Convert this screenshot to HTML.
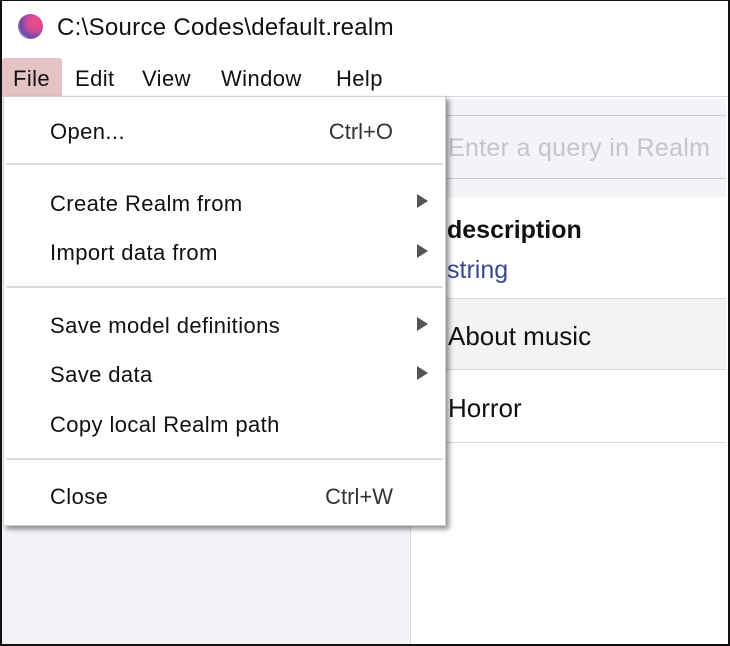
<!DOCTYPE html>
<html><head><style>
*{margin:0;padding:0;box-sizing:border-box}
body{width:730px;height:646px;overflow:hidden;background:#fff;font-family:"Liberation Sans",sans-serif;position:relative}
.frame{position:absolute;left:0;top:0;width:730px;height:646px;border:2px solid #111;border-top:1px solid #111;z-index:50;pointer-events:none}
.abs{position:absolute;white-space:nowrap}
.t{font-size:22px;color:#111;letter-spacing:0.4px}
.sep{position:absolute;left:2px;width:437px;height:2px;background:#dcdce2}
.arr{position:absolute;left:413px;width:0;height:0;border-top:7px solid transparent;border-bottom:7px solid transparent;border-left:11px solid #555}
.sc{position:absolute;right:52px;font-size:22px;color:#333}
</style></head><body>
<div class="frame"></div>
<div class="abs" style="left:18px;top:14px;width:25px;height:25px;border-radius:50%;background:radial-gradient(circle at 70% 35%,#f0507a 0,#d04a9a 35%,#6a4aa8 65%,#e8e8f0 100%)"></div>
<div class="abs" style="left:57px;top:14px;font-size:24px;color:#111;letter-spacing:0.3px">C:\Source Codes\default.realm</div>
<div class="abs" style="left:2px;top:58px;width:60px;height:38px;background:#e4c3c5;border-radius:3px 3px 0 0"></div>
<div class="abs t" style="left:13px;top:66px">File</div>
<div class="abs t" style="left:75px;top:66px">Edit</div>
<div class="abs t" style="left:142px;top:66px">View</div>
<div class="abs t" style="left:221px;top:66px">Window</div>
<div class="abs t" style="left:336px;top:66px">Help</div>
<div class="abs" style="left:2px;top:96px;width:726px;height:1px;background:#d4d4da"></div>
<div class="abs" style="left:2px;top:97px;width:409px;height:548px;background:#f3f3f7;border-right:1px solid #d8d8dc"></div>
<div class="abs" style="left:412px;top:99px;width:314px;height:98px;background:#f4f4f8"></div>
<div class="abs" style="left:412px;top:115px;width:314px;height:1px;background:#c8ccd4"></div>
<div class="abs" style="left:412px;top:178px;width:314px;height:1px;background:#c8ccd4"></div>
<div class="abs" style="left:448px;top:134px;font-size:25px;color:#c4c4cc;letter-spacing:0.3px">Enter a query in Realm</div>
<div class="abs" style="left:447px;top:216px;font-size:25px;font-weight:bold;color:#111">description</div>
<div class="abs" style="left:447px;top:256px;font-size:25px;color:#3a4a8a">string</div>
<div class="abs" style="left:412px;top:298px;width:314px;height:72px;background:#f3f3f3;border-top:1px solid #dadada;border-bottom:1px solid #dadada"></div>
<div class="abs" style="left:448px;top:321px;font-size:26px;color:#111">About music</div>
<div class="abs" style="left:448px;top:393px;font-size:26px;color:#111">Horror</div>
<div class="abs" style="left:412px;top:442px;width:314px;height:1px;background:#dadada"></div>
<div class="abs" style="left:3px;top:96px;width:443px;height:430px;background:#fff;border:1px solid #cfcfd4;box-shadow:3px 3px 5px rgba(0,0,0,.45);z-index:10">
  <div class="abs t" style="left:46px;top:22px">Open...</div><div class="sc" style="top:22px">Ctrl+O</div>
  <div class="sep" style="top:66px"></div>
  <div class="abs t" style="left:46px;top:94px">Create Realm from</div><div class="arr" style="top:97px"></div>
  <div class="abs t" style="left:46px;top:143px">Import data from</div><div class="arr" style="top:147px"></div>
  <div class="sep" style="top:189px"></div>
  <div class="abs t" style="left:46px;top:216px">Save model definitions</div><div class="arr" style="top:220px"></div>
  <div class="abs t" style="left:46px;top:265px">Save data</div><div class="arr" style="top:269px"></div>
  <div class="abs t" style="left:46px;top:315px">Copy local Realm path</div>
  <div class="sep" style="top:361px"></div>
  <div class="abs t" style="left:46px;top:387px">Close</div><div class="sc" style="top:387px">Ctrl+W</div>
</div>
</body></html>
